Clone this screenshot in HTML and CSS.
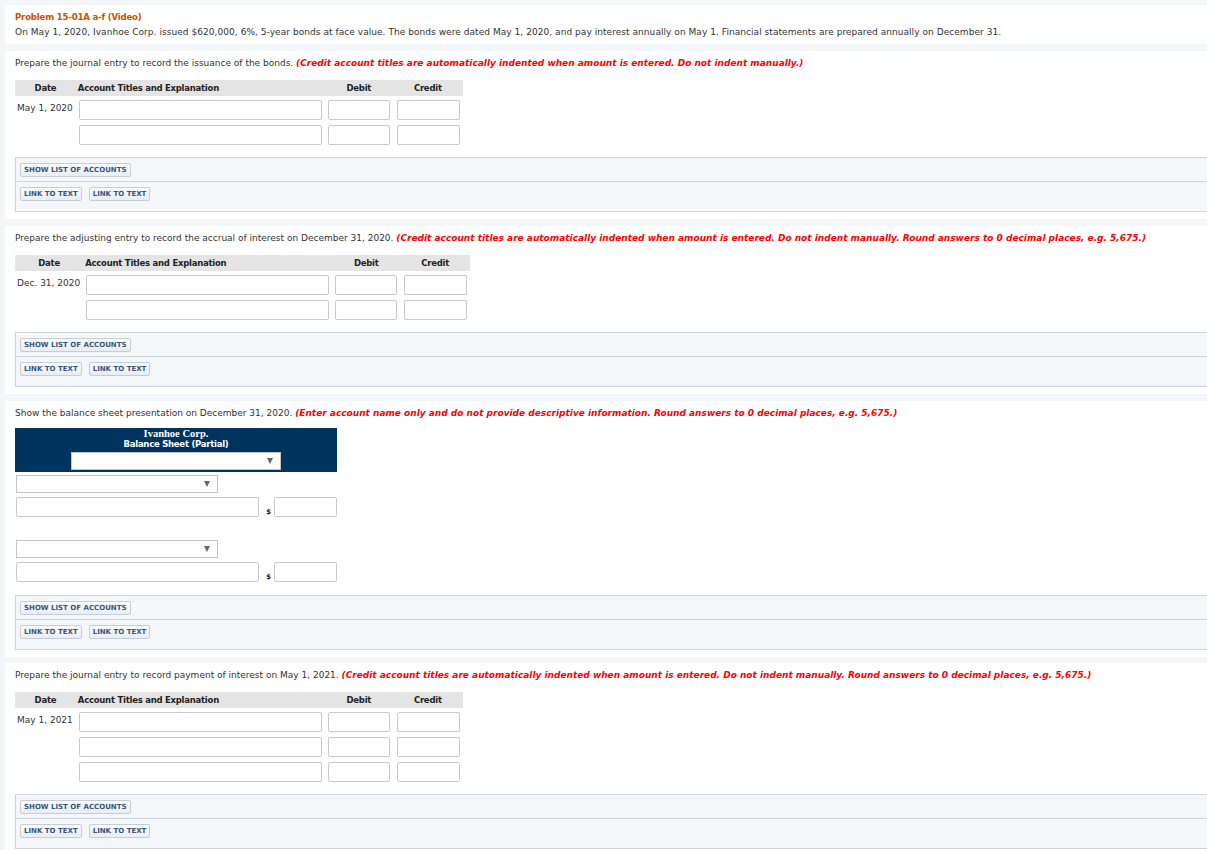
FILE: index.html
```html
<!DOCTYPE html>
<html lang="en">
<head>
    <meta charset="UTF-8">
    <meta name="viewport" content="width=device-width, initial-scale=1.0">
    <title>Problem 15-01A a-f (Video)</title>
    <link rel="stylesheet" href="styles.css">
</head>
<body>
    <div class="card intro">
        <div class="problem-title">Problem 15-01A a-f (Video)</div>
        <div class="problem-text">On May 1, 2020, Ivanhoe Corp. issued $620,000, 6%, 5-year bonds at face value. The bonds were dated May 1, 2020, and pay interest annually on May 1. Financial statements are prepared annually on December 31.</div>
    </div>

    <!-- part a -->
    <div class="card">
        <p class="prompt">Prepare the journal entry to record the issuance of the bonds. <em class="hint">(Credit account titles are automatically indented when amount is entered. Do not indent manually.)</em></p>
        <table class="journal">
            <thead>
                <tr>
                    <th class="col-date">Date</th>
                    <th class="col-account">Account Titles and Explanation</th>
                    <th class="col-amount">Debit</th>
                    <th class="col-amount">Credit</th>
                </tr>
            </thead>
            <tbody>
                <tr>
                    <td class="date">May 1, 2020</td>
                    <td class="account"><input type="text" class="field"></td>
                    <td class="debit"><input type="text" class="field"></td>
                    <td class="credit"><input type="text" class="field"></td>
                </tr>
                <tr>
                    <td class="date"></td>
                    <td class="account"><input type="text" class="field"></td>
                    <td class="debit"><input type="text" class="field"></td>
                    <td class="credit"><input type="text" class="field"></td>
                </tr>
            </tbody>
        </table>
        <div class="tools">
            <div class="tools-row"><button class="tool-btn">Show List of Accounts</button></div>
            <div class="tools-row last"><button class="tool-btn">Link to Text</button><button class="tool-btn">Link to Text</button></div>
        </div>
    </div>

    <!-- part b -->
    <div class="card">
        <p class="prompt">Prepare the adjusting entry to record the accrual of interest on December 31, 2020. <em class="hint">(Credit account titles are automatically indented when amount is entered. Do not indent manually. Round answers to 0 decimal places, e.g. 5,675.)</em></p>
        <table class="journal">
            <thead>
                <tr>
                    <th class="col-date">Date</th>
                    <th class="col-account">Account Titles and Explanation</th>
                    <th class="col-amount">Debit</th>
                    <th class="col-amount">Credit</th>
                </tr>
            </thead>
            <tbody>
                <tr>
                    <td class="date">Dec. 31, 2020</td>
                    <td class="account"><input type="text" class="field"></td>
                    <td class="debit"><input type="text" class="field"></td>
                    <td class="credit"><input type="text" class="field"></td>
                </tr>
                <tr>
                    <td class="date"></td>
                    <td class="account"><input type="text" class="field"></td>
                    <td class="debit"><input type="text" class="field"></td>
                    <td class="credit"><input type="text" class="field"></td>
                </tr>
            </tbody>
        </table>
        <div class="tools">
            <div class="tools-row"><button class="tool-btn">Show List of Accounts</button></div>
            <div class="tools-row last"><button class="tool-btn">Link to Text</button><button class="tool-btn">Link to Text</button></div>
        </div>
    </div>

    <!-- part c -->
    <div class="card balance-card">
        <p class="prompt">Show the balance sheet presentation on December 31, 2020. <em class="hint">(Enter account name only and do not provide descriptive information. Round answers to 0 decimal places, e.g. 5,675.)</em></p>
        <div class="bs">
            <div class="bs-head">
                <div class="bs-company">Ivanhoe Corp.</div>
                <div class="bs-title">Balance Sheet (Partial)</div>
                <span class="select-wrap head-select"><select></select></span>
            </div>
            <div class="bs-group">
                <span class="select-wrap item-select"><select></select></span>
                <div class="bs-line">
                    <input type="text" class="field bs-account">
                    <span class="dollar">$</span>
                    <input type="text" class="field bs-amount">
                </div>
            </div>
            <div class="bs-group second">
                <span class="select-wrap item-select"><select></select></span>
                <div class="bs-line">
                    <input type="text" class="field bs-account">
                    <span class="dollar">$</span>
                    <input type="text" class="field bs-amount">
                </div>
            </div>
        </div>
        <div class="tools">
            <div class="tools-row"><button class="tool-btn">Show List of Accounts</button></div>
            <div class="tools-row last"><button class="tool-btn">Link to Text</button><button class="tool-btn">Link to Text</button></div>
        </div>
    </div>

    <!-- part d -->
    <div class="card">
        <p class="prompt">Prepare the journal entry to record payment of interest on May 1, 2021. <em class="hint">(Credit account titles are automatically indented when amount is entered. Do not indent manually. Round answers to 0 decimal places, e.g. 5,675.)</em></p>
        <table class="journal">
            <thead>
                <tr>
                    <th class="col-date">Date</th>
                    <th class="col-account">Account Titles and Explanation</th>
                    <th class="col-amount">Debit</th>
                    <th class="col-amount">Credit</th>
                </tr>
            </thead>
            <tbody>
                <tr>
                    <td class="date">May 1, 2021</td>
                    <td class="account"><input type="text" class="field"></td>
                    <td class="debit"><input type="text" class="field"></td>
                    <td class="credit"><input type="text" class="field"></td>
                </tr>
                <tr>
                    <td class="date"></td>
                    <td class="account"><input type="text" class="field"></td>
                    <td class="debit"><input type="text" class="field"></td>
                    <td class="credit"><input type="text" class="field"></td>
                </tr>
                <tr>
                    <td class="date"></td>
                    <td class="account"><input type="text" class="field"></td>
                    <td class="debit"><input type="text" class="field"></td>
                    <td class="credit"><input type="text" class="field"></td>
                </tr>
            </tbody>
        </table>
        <div class="tools">
            <div class="tools-row"><button class="tool-btn">Show List of Accounts</button></div>
            <div class="tools-row last"><button class="tool-btn">Link to Text</button><button class="tool-btn">Link to Text</button></div>
        </div>
    </div>
</body>
</html>
```

FILE: styles.css
```css
* {
    box-sizing: border-box;
}
html {
    overflow: hidden;
}
body {
    margin: 0;
    padding: 5px 0 0 5px;
    background-color: #f4f7fa;
    font-family: "DejaVu Sans", Verdana, sans-serif;
    font-size: 9px;
    color: #333;
}
.card {
    background-color: #fff;
    padding: 5px 0 7px 10px;
    margin-bottom: 7px;
}
.intro {
    padding-bottom: 4px;
}
.balance-card {
    margin-bottom: 6px;
}
.problem-title {
    font-weight: bold;
    font-size: 8.6px;
    letter-spacing: -0.2px;
    line-height: 15px;
    color: #cc5200;
}
.problem-text {
    line-height: 15px;
    letter-spacing: 0.05px;
    white-space: nowrap;
}
.prompt {
    margin: 0;
    line-height: 14px;
    white-space: nowrap;
}
.hint {
    font-weight: bold;
    font-size: 9px;
    color: #f00;
}

/* journal entry table */
.journal {
    border-collapse: collapse;
    margin-top: 10px;
}
.journal th {
    height: 16px;
    padding: 0;
    background-color: #e4e4e4;
    font-size: 8.5px;
    letter-spacing: -0.25px;
    line-height: 16px;
    color: #222;
    text-align: center;
}
.journal th.col-account {
    text-align: left;
    padding-left: 2px;
}
.journal td {
    padding: 4px 3px 1px;
    vertical-align: top;
}
.journal td.date {
    padding-left: 2px;
    line-height: 16px;
    white-space: nowrap;
}
.journal td.credit {
    padding-left: 4px;
}
.journal .account .field {
    width: 243px;
}
.journal .debit .field {
    width: 62px;
}
.journal .credit .field {
    width: 63px;
}
.field {
    display: block;
    height: 20px;
    margin: 0;
    padding: 0 3px;
    border: 1px solid #c9c9c9;
    border-radius: 2px;
    background-color: #fff;
    font: inherit;
}

/* balance sheet */
.bs {
    width: 322px;
    margin-top: 8px;
}
.bs-head {
    padding-bottom: 2px;
    background-color: #00345f;
    color: #fff;
    text-align: center;
    font-weight: bold;
}
.bs-company {
    font-family: "Liberation Serif", serif;
    font-size: 10.5px;
    line-height: 11px;
}
.bs-title {
    font-size: 8.5px;
    letter-spacing: -0.25px;
    line-height: 11px;
}
.select-wrap {
    position: relative;
    display: block;
}
.select-wrap select {
    display: block;
    width: 100%;
    height: 100%;
    margin: 0;
    border: 1px solid #c4c4c4;
    border-radius: 0;
    background-color: #fff;
    appearance: none;
    -webkit-appearance: none;
}
.select-wrap::after {
    content: "";
    position: absolute;
    right: 8px;
    top: 6px;
    border-left: 3.5px solid transparent;
    border-right: 3.5px solid transparent;
    border-top: 6px solid #666;
}
.head-select {
    width: 210px;
    height: 18px;
    margin: 2px auto 0;
}
.item-select {
    width: 202px;
    height: 18px;
    margin: 3px 0 0 1px;
}
.bs-line {
    display: flex;
    align-items: flex-end;
    margin-top: 4px;
}
.bs-account {
    width: 243px;
    margin-left: 1px;
}
.dollar {
    width: 15px;
    padding-right: 3px;
    text-align: right;
    font-size: 7px;
    font-weight: bold;
    line-height: 9px;
    color: #222;
}
.bs-amount {
    width: 63px;
}
.bs-group.second {
    margin-top: 23px;
}
.bs + .tools {
    margin-top: 13px;
}

/* tool panel */
.tools {
    margin-top: 11px;
    border: 1px solid #cdd4dc;
    border-right: 0;
    background-color: #f4f7fa;
}
.tools-row {
    display: flex;
    gap: 7px;
    padding: 5px 4px 4px;
    border-bottom: 1px solid #cdd4dc;
}
.tools-row.last {
    padding-bottom: 10px;
    border-bottom: 0;
}
.tool-btn {
    height: 14px;
    padding: 0 3px;
    border: 1px solid #c6cdd6;
    border-radius: 2px;
    background: linear-gradient(#fbfcfd, #e9edf2);
    font-family: "DejaVu Sans", Verdana, sans-serif;
    font-size: 7px;
    font-weight: bold;
    line-height: 12px;
    text-transform: uppercase;
    color: #3a5479;
    cursor: pointer;
}
```
